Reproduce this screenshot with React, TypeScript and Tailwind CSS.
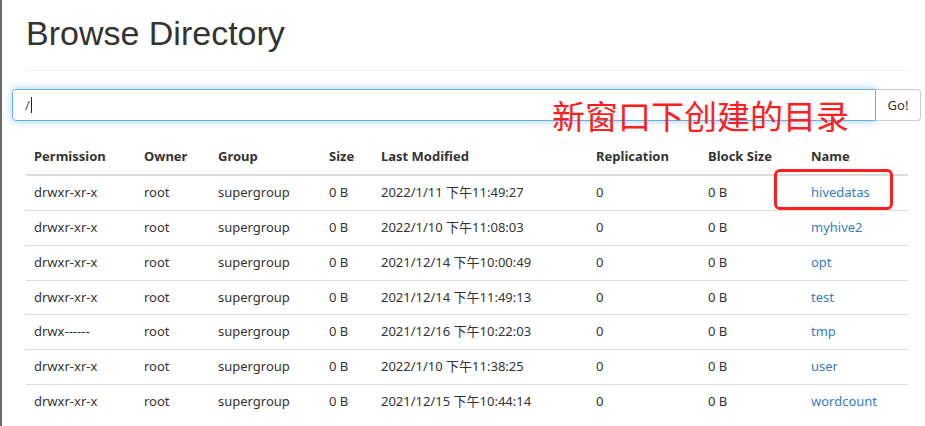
import React from 'react';

type Entry = {
  perm: string;
  owner: string;
  group: string;
  size: string;
  modified: string;
  replication: string;
  blockSize: string;
  name: string;
};

const entries: Entry[] = [
  { perm: 'drwxr-xr-x', owner: 'root', group: 'supergroup', size: '0 B', modified: '2022/1/11 下午11:49:27', replication: '0', blockSize: '0 B', name: 'hivedatas' },
  { perm: 'drwxr-xr-x', owner: 'root', group: 'supergroup', size: '0 B', modified: '2022/1/10 下午11:08:03', replication: '0', blockSize: '0 B', name: 'myhive2' },
  { perm: 'drwxr-xr-x', owner: 'root', group: 'supergroup', size: '0 B', modified: '2021/12/14 下午10:00:49', replication: '0', blockSize: '0 B', name: 'opt' },
  { perm: 'drwxr-xr-x', owner: 'root', group: 'supergroup', size: '0 B', modified: '2021/12/14 下午11:49:13', replication: '0', blockSize: '0 B', name: 'test' },
  { perm: 'drwx------', owner: 'root', group: 'supergroup', size: '0 B', modified: '2021/12/16 下午10:22:03', replication: '0', blockSize: '0 B', name: 'tmp' },
  { perm: 'drwxr-xr-x', owner: 'root', group: 'supergroup', size: '0 B', modified: '2022/1/10 下午11:38:25', replication: '0', blockSize: '0 B', name: 'user' },
  { perm: 'drwxr-xr-x', owner: 'root', group: 'supergroup', size: '0 B', modified: '2021/12/15 下午10:44:14', replication: '0', blockSize: '0 B', name: 'wordcount' },
];

const headers = ['Permission', 'Owner', 'Group', 'Size', 'Last Modified', 'Replication', 'Block Size', 'Name'];
const colWidths = ['w-[110px]', 'w-[74px]', 'w-[111px]', 'w-[52px]', 'w-[215px]', 'w-[112px]', 'w-[103px]', 'w-[105px]'];

export default function App() {
  return (
    <div className="relative min-h-screen overflow-hidden border-l-2 border-[#6b6b6b] bg-white text-[#333] font-['Noto_Sans','Noto_Sans_CJK_SC',sans-serif]">
      {/* Page header */}
      <div className="ml-[24px] mr-[17px]">
        <h1 className="pt-[15px] text-[34px] leading-[1.1] font-normal font-['Liberation_Sans',Arial,sans-serif]">
          Browse Directory
        </h1>
        <hr className="mt-[18px] border-t border-[#eee]" />
      </div>

      {/* Path input */}
      <div className="ml-[10px] mr-[4px] mt-[18px] flex h-[32px]">
        <div className="flex flex-1 items-center rounded-l-[4px] border border-[#66afe9] pl-[12px] text-[13px] shadow-[0_0_8px_rgba(102,175,233,0.6)]">
          <span className="text-[#555]">/</span>
          <span className="ml-[1px] h-[16px] w-px bg-[#222]"></span>
        </div>
        <button className="w-[45px] rounded-r-[4px] border border-l-0 border-[#ccc] bg-white text-[13px] text-[#333]">
          Go!
        </button>
      </div>

      {/* Listing */}
      <div className="ml-[24px] mr-[17px] mt-[19px]">
        <table className="w-full table-fixed border-collapse text-left text-[13px] leading-[17.8px]">
          <thead>
            <tr>
              {headers.map((h, i) => (
                <th key={h} className={`${colWidths[i]} border-b-2 border-[#ddd] px-[8px] py-[8px] font-bold`}>
                  {h}
                </th>
              ))}
            </tr>
          </thead>
          <tbody>
            {entries.map((e) => (
              <tr key={e.name}>
                <td className="border-t border-[#ddd] px-[8px] py-[8px]">{e.perm}</td>
                <td className="border-t border-[#ddd] px-[8px] py-[8px]">{e.owner}</td>
                <td className="border-t border-[#ddd] px-[8px] py-[8px]">{e.group}</td>
                <td className="border-t border-[#ddd] px-[8px] py-[8px]">{e.size}</td>
                <td className="border-t border-[#ddd] px-[8px] py-[8px] whitespace-nowrap">{e.modified}</td>
                <td className="border-t border-[#ddd] px-[8px] py-[8px]">{e.replication}</td>
                <td className="border-t border-[#ddd] px-[8px] py-[8px]">{e.blockSize}</td>
                <td className="border-t border-[#ddd] px-[8px] py-[8px]">
                  <a href="#" className="text-[#3a7cc0]">{e.name}</a>
                </td>
              </tr>
            ))}
          </tbody>
        </table>
      </div>

      {/* Annotation overlay */}
      <div className="absolute left-[550px] top-[99px] text-[33px] leading-none text-[#fe2020] font-['Noto_Sans_CJK_SC',sans-serif]">
        新窗口下创建的目录
      </div>
      <div className="absolute left-[772px] top-[169px] h-[41px] w-[119px] rounded-[6px] border-[3px] border-[#fe2020]"></div>
    </div>
  );
}
